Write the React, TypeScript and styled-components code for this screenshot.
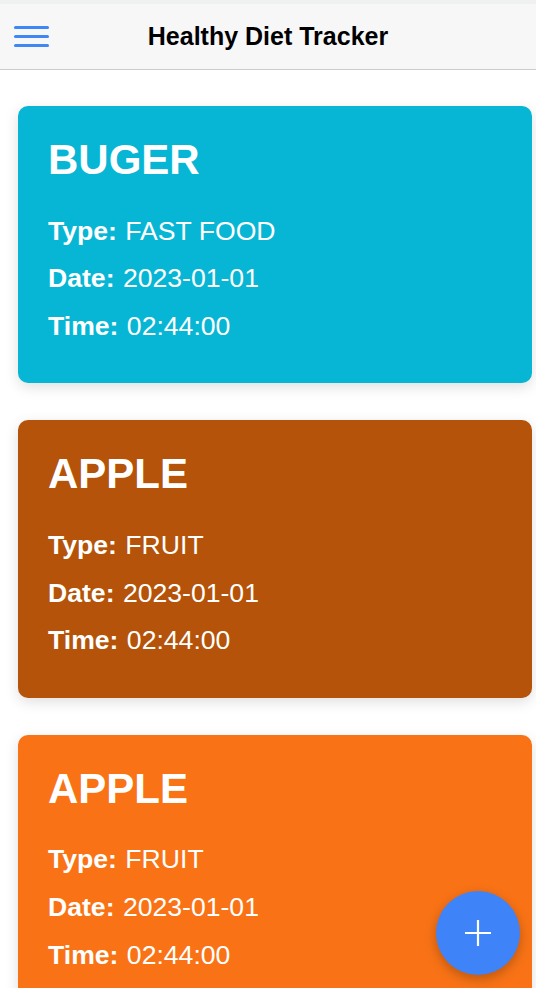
import React from "react";
import styled, { createGlobalStyle } from "styled-components";

interface Meal {
  name: string;
  type: string;
  date: string;
  time: string;
  color: string;
}

const meals: Meal[] = [
  { name: "BUGER", type: "FAST FOOD", date: "2023-01-01", time: "02:44:00", color: "#07b6d5" },
  { name: "APPLE", type: "FRUIT", date: "2023-01-01", time: "02:44:00", color: "#b45309" },
  { name: "APPLE", type: "FRUIT", date: "2023-01-01", time: "02:44:00", color: "#f97316" },
];

const GlobalStyle = createGlobalStyle`
  html, body {
    margin: 0;
    padding: 0;
    background: #ffffff;
    font-family: "Liberation Sans", Arial, sans-serif;
    overflow: hidden;
  }
`;

const Page = styled.div`
  height: 988px;
  overflow: hidden;
  display: flex;
  flex-direction: column;
  border-top: 4px solid #eff0f0;
`;

const Toolbar = styled.header`
  height: 65px;
  flex-shrink: 0;
  background: #f7f7f7;
  border-bottom: 1px solid #cccccc;
  display: flex;
  align-items: center;
  padding: 0 14px;
`;

const MenuButton = styled.button`
  border: none;
  background: none;
  padding: 0;
  width: 35px;
  height: 21px;
  display: flex;
  flex-direction: column;
  justify-content: space-between;
  cursor: pointer;
`;

const MenuLine = styled.span`
  display: block;
  height: 3px;
  border-radius: 2px;
  background: #3f87f5;
`;

const Title = styled.h1`
  flex: 1;
  margin: 0 35px 0 0;
  text-align: center;
  font-size: 25px;
  font-weight: bold;
  color: #000000;
`;

const List = styled.main`
  display: flex;
  flex-direction: column;
  gap: 37px;
  padding: 36px 4px 0 18px;
`;

const Card = styled.div<{ $bg: string }>`
  background: ${(p) => p.$bg};
  border-radius: 10px;
  padding: 30px 30px 32.5px 30px;
  color: #ffffff;
  box-shadow: 0 4px 14px rgba(0, 0, 0, 0.13);
`;

const CardTitle = styled.h2`
  margin: 0 0 23.5px 0;
  font-size: 42px;
  line-height: 48px;
  font-weight: bold;
`;

const Row = styled.p`
  margin: 0;
  font-size: 26.6px;
  line-height: 47.75px;
`;

const Label = styled.strong`
  font-weight: bold;
  margin-right: 1px;
`;

const Fab = styled.button`
  position: fixed;
  right: 16px;
  bottom: 13px;
  width: 84px;
  height: 84px;
  border-radius: 50%;
  border: none;
  background: #3f83f8;
  display: flex;
  align-items: center;
  justify-content: center;
  box-shadow: 0 4px 12px rgba(0, 0, 0, 0.25);
  cursor: pointer;
`;

function MealCard({ meal }: { meal: Meal }) {
  return (
    <Card $bg={meal.color}>
      <CardTitle>{meal.name}</CardTitle>
      <Row>
        <Label>Type:</Label> {meal.type}
      </Row>
      <Row>
        <Label>Date:</Label> {meal.date}
      </Row>
      <Row>
        <Label>Time:</Label> {meal.time}
      </Row>
    </Card>
  );
}

function App() {
  return (
    <Page>
      <GlobalStyle />
      <Toolbar>
        <MenuButton aria-label="menu">
          <MenuLine />
          <MenuLine />
          <MenuLine />
        </MenuButton>
        <Title>Healthy Diet Tracker</Title>
      </Toolbar>
      <List>
        {meals.map((m, i) => (
          <MealCard key={i} meal={m} />
        ))}
      </List>
      <Fab aria-label="add">
        <svg width="28" height="28" viewBox="0 0 28 28">
          <path d="M14 1v26M1 14h26" stroke="#ffffff" strokeWidth="2.2" />
        </svg>
      </Fab>
    </Page>
  );
}

export default App;
